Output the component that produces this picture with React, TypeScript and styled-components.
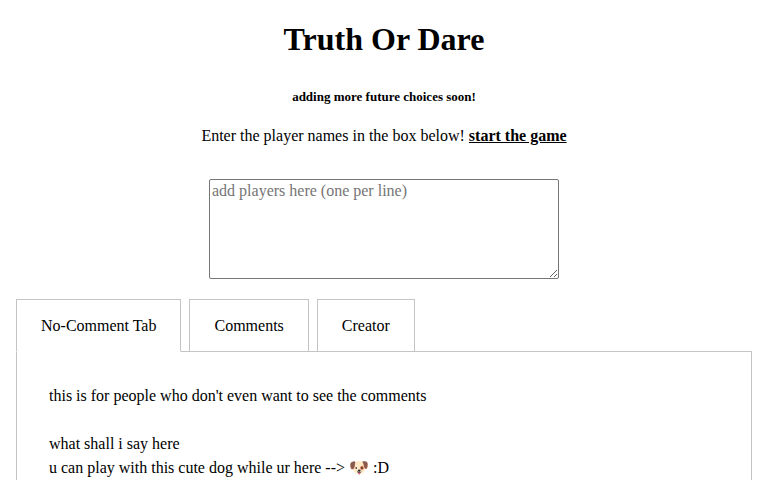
import { useState } from "react";
import styled, { createGlobalStyle } from "styled-components";

const GlobalStyle = createGlobalStyle`
  body {
    margin: 0;
    background: #fff;
    color: #000;
    font-family: "Liberation Serif", "Times New Roman", serif;
  }
`;

const tabs = ["No-Comment Tab", "Comments", "Creator"];

const Landing = () => {
  const [active, setActive] = useState(0);

  return (
    <Page>
      <GlobalStyle />
      <Title>Truth Or Dare</Title>
      <Notice>adding more future choices soon!</Notice>
      <Intro>
        Enter the player names in the box below! <StartLink href="#">start the game</StartLink>
      </Intro>

      <PlayerBox placeholder="add players here (one per line)" />

      <Tabs>
        <TabRow>
          {tabs.map((t, i) => (
            <Tab key={t} $active={i === active} onClick={() => setActive(i)}>
              {t}
            </Tab>
          ))}
        </TabRow>
        <Panel>
          this is for people who don't even want to see the comments
          <br />
          <br />
          what shall i say here
          <br />
          u can play with this cute dog while ur here --&gt; 🐶 :D
        </Panel>
      </Tabs>
    </Page>
  );
};

export default Landing;

const Page = styled.div`
  display: flex;
  flex-direction: column;
  align-items: center;
  padding: 0 16px;
`;

const Title = styled.h1`
  font-size: 32px;
  font-weight: bold;
  margin: 21px 0 0;
  line-height: 37px;
`;

const Notice = styled.h5`
  font-size: 13px;
  font-weight: bold;
  margin: 31px 0 0;
  line-height: 15px;
`;

const Intro = styled.p`
  font-size: 16px;
  margin: 23px 0 0;
  line-height: 18px;
`;

const StartLink = styled.a`
  color: #000;
  font-weight: bold;
  text-decoration: underline;
`;

const PlayerBox = styled.textarea`
  box-sizing: border-box;
  width: 350px;
  height: 100px;
  margin-top: 34px;
  padding: 2px;
  font-family: "Liberation Serif", "Times New Roman", serif;
  font-size: 16px;
  border: 1px solid #767676;
  border-radius: 2px;
  resize: both;

  &::placeholder {
    color: #757575;
  }
`;

const Tabs = styled.div`
  align-self: stretch;
  margin-top: 20px;
`;

const TabRow = styled.div`
  display: flex;
  gap: 8px;
`;

const Tab = styled.button<{ $active: boolean }>`
  font-family: "Liberation Serif", "Times New Roman", serif;
  font-size: 16px;
  line-height: 18px;
  color: #000;
  background: #fff;
  padding: 17px 24px 16px;
  border: 1px solid #c4c4c4;
  border-bottom: ${(p) => (p.$active ? "1px solid #fff" : "1px solid #c4c4c4")};
  margin-bottom: -1px;
  position: relative;
  z-index: ${(p) => (p.$active ? 1 : 0)};
  cursor: pointer;
`;

const Panel = styled.div`
  border: 1px solid #c4c4c4;
  padding: 32px 32px;
  font-size: 16px;
  line-height: 24px;
  min-height: 200px;
`;
